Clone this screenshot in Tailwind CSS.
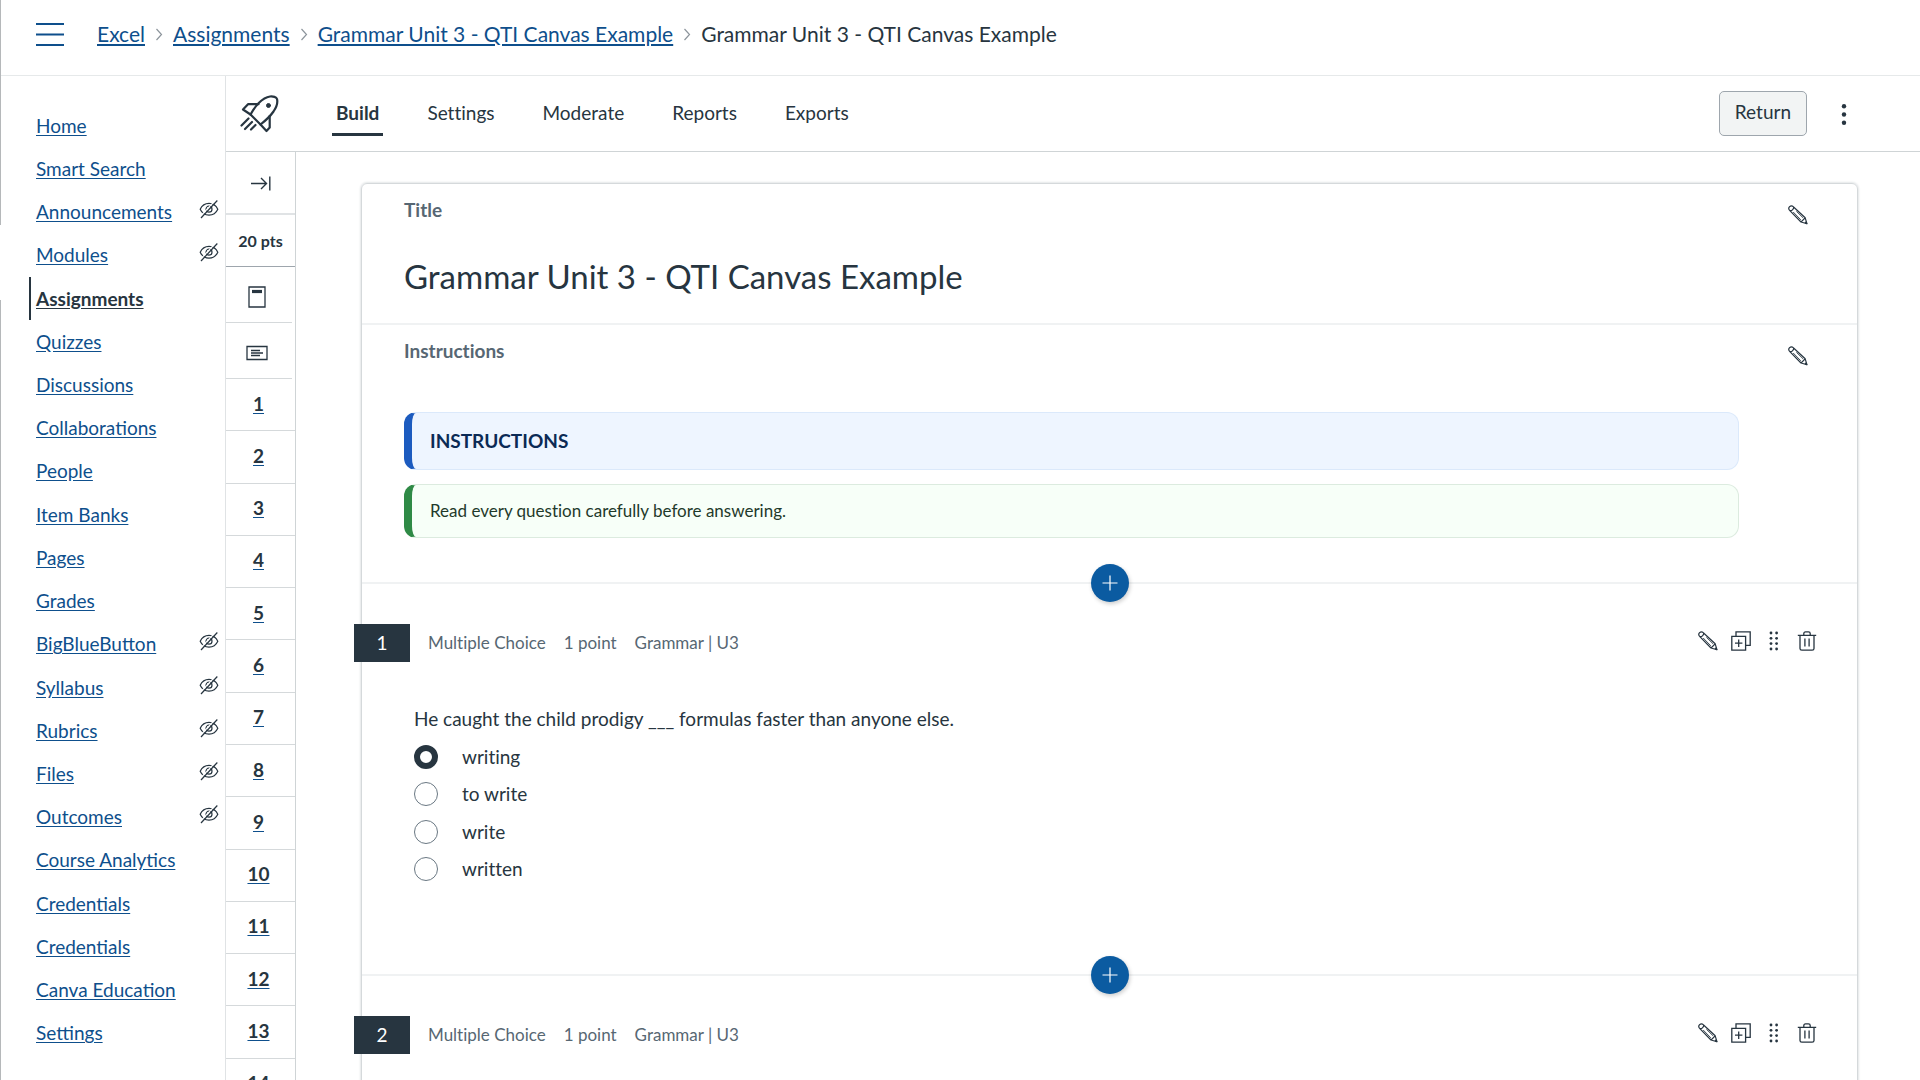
<!DOCTYPE html>
<html lang="en">
<head>
  <meta charset="UTF-8">
  <meta name="viewport" content="width=device-width, initial-scale=1.0">
  <title>Grammar Unit 3 - QTI Canvas Example</title>
  <script src="https://cdn.jsdelivr.net/npm/@tailwindcss/browser@4"></script>
  <script>
    const navItems = [
      ["Home"], ["Smart Search"], ["Announcements", "hidden"], ["Modules", "hidden"], ["Assignments", "active"],
      ["Quizzes"], ["Discussions"], ["Collaborations"], ["People"], ["Item Banks"], ["Pages"], ["Grades"],
      ["BigBlueButton", "hidden"], ["Syllabus", "hidden"], ["Rubrics", "hidden"], ["Files", "hidden"],
      ["Outcomes", "hidden"], ["Course Analytics"], ["Credentials"], ["Credentials"], ["Canva Education"], ["Settings"]
    ];

    document.addEventListener("DOMContentLoaded", () => {
      loadNav();
      loadQuestionRail();
    });

    function loadNav() {
      const nav = document.getElementById("course-nav");
      navItems.forEach(([label, state]) => {
        const active = state === "active";
        nav.innerHTML += `
          <li class="flex items-center border-l-2 pl-[5px] pr-1.5 ${active ? "border-[#273540]" : "border-transparent"}">
            <a href="#" class="flex-1 underline underline-offset-2 ${active ? "font-bold text-[#273540]" : "text-[#0e4f8c]"}">${label}</a>
            ${state === "hidden" ? `<svg class="mb-1.5 size-5 text-[#273540]" role="img" aria-label="Hidden from students"><use href="#icon-hidden"/></svg>` : ""}
          </li>
        `;
      });
    }

    function loadQuestionRail() {
      const rail = document.getElementById("question-rail");
      for (let i = 1; i <= 14; i++) {
        rail.innerHTML += `
          <li class="flex items-center justify-center border-b border-[#d5d9db] pb-0.5 pr-1">
            <a href="#" class="text-[19px] font-bold leading-6 text-[#273540] underline decoration-[#0e4f8c] underline-offset-2">${i}</a>
          </li>
        `;
      }
    }
  </script>
</head>
<body class="relative flex h-screen flex-col overflow-hidden bg-white font-['Lato',sans-serif] text-[#273540]">

  <!-- Icons -->
  <svg class="hidden">
    <symbol id="icon-hidden" viewBox="0 0 20 20" fill="none" stroke="currentColor" stroke-width="1.2">
      <path d="M1.200 10.200C3 6.300 6.200 4.300 10 4.300s7 2 8.800 5.900c-1.800 3.900-5 5.900-8.800 5.900s-7-2-8.800-5.900z"/>
      <circle cx="10" cy="10.200" r="3"/>
      <path d="M16.800.9L.8 18" stroke="#fff"/>
      <path d="M18.300 1.500L2 19"/>
    </symbol>
    <symbol id="icon-pencil" viewBox="0 0 20 20" fill="none" stroke="currentColor" stroke-linejoin="round">
      <path d="M1.600 5.300C.4 4 .6 2.700 1.600 1.700s2.500-1.200 3.700 0L17.200 12.800l1.800 6-6-1.800zM5.600 2c.5 1.700-1.700 4.200-3.700 3.600M17.200 12.800l-4.200 4.200" stroke-width="1.200"/>
      <path d="M5.200 7l7.600 7.800M8.400 6.300l6.800 6.600" stroke-width=".9"/>
      <path d="M17.700 16.800L19 18.800l-2-.8z" fill="currentColor"/>
    </symbol>
    <symbol id="icon-duplicate" viewBox="0 0 20 20" fill="none" stroke="currentColor" stroke-width="1.300">
      <path d="M.8 5.300h13.800v13.900H.8zM5 5.300V.8h14.200v13.600h-4.600M7.700 8.500v7.400M4 12.200h7.400"/>
    </symbol>
    <symbol id="icon-drag" viewBox="0 0 20 20" fill="currentColor">
      <circle cx="7" cy="2" r="1.400"/><circle cx="12.600" cy="2" r="1.400"/>
      <circle cx="7" cy="7.300" r="1.400"/><circle cx="12.600" cy="7.300" r="1.400"/>
      <circle cx="7" cy="12.600" r="1.400"/><circle cx="12.600" cy="12.600" r="1.400"/>
      <circle cx="7" cy="18" r="1.400"/><circle cx="12.600" cy="18" r="1.400"/>
    </symbol>
    <symbol id="icon-trash" viewBox="0 0 20 20" fill="none" stroke="currentColor" stroke-width="1.300">
      <path d="M.8 4.400h18.400M6.800 4.200V2.600c0-1 .7-1.800 1.700-1.800h3c1 0 1.700.8 1.700 1.800v1.600M3 4.600v12.800c0 1 .8 1.800 1.800 1.800h10.400c1 0 1.800-.8 1.800-1.800V4.600M7.900 7.600v8M12.100 7.600v8"/>
    </symbol>
    <symbol id="icon-plus" viewBox="0 0 16 16" fill="none" stroke="currentColor" stroke-width="1.200">
      <path d="M8 .5v15M.5 8h15"/>
    </symbol>
    <symbol id="icon-chevron" viewBox="0 0 8 14" fill="none" stroke="currentColor" stroke-width="1.200">
      <path d="M1.500 2l5 5.500-5 5.500"/>
    </symbol>
  </svg>

  <!-- Window edge -->
  <span class="absolute left-0 top-0 h-[225px] w-px bg-[#b5b8ba]"></span>
  <span class="absolute bottom-0 left-0 top-[300px] w-px bg-[#b5b8ba]"></span>

  <!-- Breadcrumbs -->
  <header class="flex h-[76px] shrink-0 items-center border-b border-[#e6e9ea] pb-2 pl-9">
    <button aria-label="Course menu" class="mr-[33px] text-[#0e4f8c]">
      <svg class="h-6 w-7" viewBox="0 0 28 24" fill="none" stroke="currentColor" stroke-width="2">
        <path d="M0 2h28M0 12.500h28M0 23h28"/>
      </svg>
    </button>
    <nav aria-label="Breadcrumb" class="flex items-center gap-2.5 text-[21px] leading-7">
      <a href="#" class="text-[#0e4f8c] underline underline-offset-2">Excel</a>
      <svg class="h-3.5 w-2 text-[#8d959c]"><use href="#icon-chevron"/></svg>
      <a href="#" class="text-[#0e4f8c] underline underline-offset-2">Assignments</a>
      <svg class="h-3.5 w-2 text-[#8d959c]"><use href="#icon-chevron"/></svg>
      <a href="#" class="text-[#0e4f8c] underline underline-offset-2">Grammar Unit 3 - QTI Canvas Example</a>
      <svg class="h-3.5 w-2 text-[#8d959c]"><use href="#icon-chevron"/></svg>
      <span>Grammar Unit 3 - QTI Canvas Example</span>
    </nav>
  </header>

  <div class="flex min-h-0 flex-1">

    <!-- Course navigation -->
    <aside class="w-[226px] shrink-0 border-r border-[#e0e3e5] pl-[29px] pt-7">
      <ul id="course-nav" class="grid h-[951px] auto-rows-fr text-[19px] leading-6"></ul>
    </aside>

    <div class="flex min-w-0 flex-1 flex-col [font-variant-ligatures:none]">

      <!-- Quiz tabs -->
      <div class="flex h-[76px] shrink-0 items-center border-b border-[#cfd4d6] pl-3.5 pr-[70px] text-[19px]">
        <svg class="size-10 shrink-0" viewBox="0 0 40 40" fill="none" stroke="currentColor" stroke-width="2.200" stroke-linejoin="round" stroke-linecap="round">
          <path d="M10.500 20.500C14.500 13 22 3.500 30 2.500c3-.4 6.500.6 7 2.500.8 3-.5 8-3.500 12.500C30 22.500 25 27 20.500 30.500z"/>
          <path d="M18.500 10.200H8L3 15.500l7.500 5M20.500 30.500l6 6.500 3.200-3.500V22"/>
          <circle cx="28.500" cy="11.500" r="2" fill="currentColor" stroke-width="1"/>
          <path d="M8.500 24.500L1.500 31.500M12 28l-7 7M15.500 31l-4.500 4.500"/>
        </svg>
        <nav aria-label="Quiz" class="ml-[52px] flex gap-10 leading-6">
          <a href="#" class="border-b-[3px] border-[#273540] px-1 pb-2 pt-[9px] font-bold">Build</a>
          <a href="#" class="px-1 pb-2 pt-[9px]">Settings</a>
          <a href="#" class="px-1 pb-2 pt-[9px]">Moderate</a>
          <a href="#" class="px-1 pb-2 pt-[9px]">Reports</a>
          <a href="#" class="px-1 pb-2 pt-[9px]">Exports</a>
        </nav>
        <button class="ml-auto h-[45px] rounded-[5px] border border-[#9ea6ad] bg-[#f2f4f4] px-[15px] pb-0.5">Return</button>
        <button aria-label="More options" class="ml-[31px] pt-0.5">
          <svg class="h-[21px] w-3" viewBox="0 0 12 21" fill="currentColor">
            <circle cx="6" cy="2.200" r="2.200"/><circle cx="6" cy="10.500" r="2.200"/><circle cx="6" cy="18.800" r="2.200"/>
          </svg>
        </button>
      </div>

      <div class="flex min-h-0 flex-1">

        <!-- Question rail -->
        <div class="w-[70px] shrink-0 overflow-hidden border-r border-[#cfd4d6]">
          <button aria-label="Expand" class="flex h-[63px] w-full items-center justify-center border-b-2 border-[#e0e3e5]">
            <svg class="h-4 w-5" viewBox="0 0 20 16" fill="none" stroke="currentColor" stroke-width="1.400">
              <path d="M0 8.500h15.500M10 3L15.500 8.500 10 14M18.800 1.500v14"/>
            </svg>
          </button>
          <p class="flex h-[52px] items-center justify-center border-b border-[#9ea6ad] text-base font-bold">20 pts</p>
          <button aria-label="Title" class="flex h-14 w-[66px] items-center justify-center border-b border-[#d5d9db] pr-1 pt-1">
            <svg class="h-[22px] w-[18px]" viewBox="0 0 18 22" fill="none" stroke="currentColor" stroke-width="1.300">
              <path d="M1 1h16v20H1z"/><path d="M4 5.500h10" stroke-width="3.200"/>
            </svg>
          </button>
          <button aria-label="Instructions" class="flex h-14 w-[66px] items-center justify-center border-b border-[#d5d9db] pr-1 pt-1">
            <svg class="h-4 w-[22px]" viewBox="0 0 22 16" fill="none" stroke="currentColor" stroke-width="1.300">
              <path d="M1 1.500h20v13H1zM5 5.500h9M5 8h12M5 10.500h9"/>
            </svg>
          </button>
          <ol id="question-rail" class="grid h-[732px] auto-rows-fr"></ol>
        </div>

        <!-- Quiz content -->
        <main class="min-w-0 flex-1 pl-[65px] pr-[62px] pt-[31px]">
          <div class="h-[1200px] rounded-md border border-[#d5d9db] shadow-[0_0_2px_1px_#e4e7e8]">

            <section class="flex justify-between pb-[27px] pl-[42px] pr-[49px] pt-3">
              <div>
                <p class="text-[19px] font-bold leading-7 text-[#576773]">Title</p>
                <h1 class="mt-8 text-[33px] leading-10">Grammar Unit 3 - QTI Canvas Example</h1>
              </div>
              <button aria-label="Edit title" class="mt-[9px] size-5"><svg class="size-5"><use href="#icon-pencil"/></svg></button>
            </section>

            <section class="flex justify-between border-t-2 border-[#f0f2f3] pb-11 pl-[42px] pr-[49px] pt-3">
              <div class="flex-1 pr-[49px]">
                <h2 class="text-[19px] font-bold leading-7 text-[#576773]">Instructions</h2>
                <div class="mt-[47px] rounded-xl border border-l-8 border-[#dbe9fb] border-l-[#1c5bbf] bg-[#eef5ff] px-[18px] py-3.5 text-[19px] font-bold leading-7 text-[#0b2a55]">INSTRUCTIONS</div>
                <div class="mt-3.5 rounded-xl border border-l-8 border-[#dcebdf] border-l-[#2f8a46] bg-[#f7fff8] px-[18px] py-3.5 text-[17px] leading-6 text-[#1f3a2b]">Read every question carefully before answering.</div>
              </div>
              <button aria-label="Edit instructions" class="mt-[9px] size-5"><svg class="size-5"><use href="#icon-pencil"/></svg></button>
            </section>

            <section class="relative border-t-2 border-[#f0f2f3] pb-[86px] pt-10">
              <button aria-label="Add question" class="absolute -top-5 left-1/2 flex size-[38px] -translate-x-1/2 items-center justify-center rounded-full bg-[#0b5ba1] text-white shadow-[1px_2px_4px_#0003]">
                <svg class="size-4"><use href="#icon-plus"/></svg>
              </button>
              <div class="-ml-2 flex h-[38px] items-center gap-[18px] pr-10 text-[17px] text-[#576773]">
                <span class="flex h-[38px] w-14 items-center justify-center bg-[#273540] text-[19px] text-white">1</span>
                <span>Multiple Choice</span>
                <span>1 point</span>
                <span>Grammar | U3</span>
                <div class="ml-auto flex gap-[13px] pb-1 text-[#273540]">
                  <button aria-label="Edit"><svg class="size-5"><use href="#icon-pencil"/></svg></button>
                  <button aria-label="Duplicate"><svg class="size-5"><use href="#icon-duplicate"/></svg></button>
                  <button aria-label="Move"><svg class="size-5"><use href="#icon-drag"/></svg></button>
                  <button aria-label="Delete"><svg class="size-5"><use href="#icon-trash"/></svg></button>
                </div>
              </div>
              <fieldset class="mt-[43px] pl-[52px] text-[19px]">
                <legend class="leading-7">He caught the child prodigy ___ formulas faster than anyone else.</legend>
                <div class="mt-[5px] grid h-[150px] auto-rows-fr">
                  <label class="flex items-center gap-6"><input type="radio" name="q1" checked class="size-6 appearance-none rounded-full border border-[#6a7883] checked:border-[6px] checked:border-[#273540]">writing</label>
                  <label class="flex items-center gap-6"><input type="radio" name="q1" class="size-6 appearance-none rounded-full border border-[#6a7883] checked:border-[6px] checked:border-[#273540]">to write</label>
                  <label class="flex items-center gap-6"><input type="radio" name="q1" class="size-6 appearance-none rounded-full border border-[#6a7883] checked:border-[6px] checked:border-[#273540]">write</label>
                  <label class="flex items-center gap-6"><input type="radio" name="q1" class="size-6 appearance-none rounded-full border border-[#6a7883] checked:border-[6px] checked:border-[#273540]">written</label>
                </div>
              </fieldset>
            </section>

            <section class="relative border-t-2 border-[#f0f2f3] pt-10">
              <button aria-label="Add question" class="absolute -top-5 left-1/2 flex size-[38px] -translate-x-1/2 items-center justify-center rounded-full bg-[#0b5ba1] text-white shadow-[1px_2px_4px_#0003]">
                <svg class="size-4"><use href="#icon-plus"/></svg>
              </button>
              <div class="-ml-2 flex h-[38px] items-center gap-[18px] pr-10 text-[17px] text-[#576773]">
                <span class="flex h-[38px] w-14 items-center justify-center bg-[#273540] text-[19px] text-white">2</span>
                <span>Multiple Choice</span>
                <span>1 point</span>
                <span>Grammar | U3</span>
                <div class="ml-auto flex gap-[13px] pb-1 text-[#273540]">
                  <button aria-label="Edit"><svg class="size-5"><use href="#icon-pencil"/></svg></button>
                  <button aria-label="Duplicate"><svg class="size-5"><use href="#icon-duplicate"/></svg></button>
                  <button aria-label="Move"><svg class="size-5"><use href="#icon-drag"/></svg></button>
                  <button aria-label="Delete"><svg class="size-5"><use href="#icon-trash"/></svg></button>
                </div>
              </div>
            </section>

          </div>
        </main>
      </div>
    </div>
  </div>

</body>
</html>
